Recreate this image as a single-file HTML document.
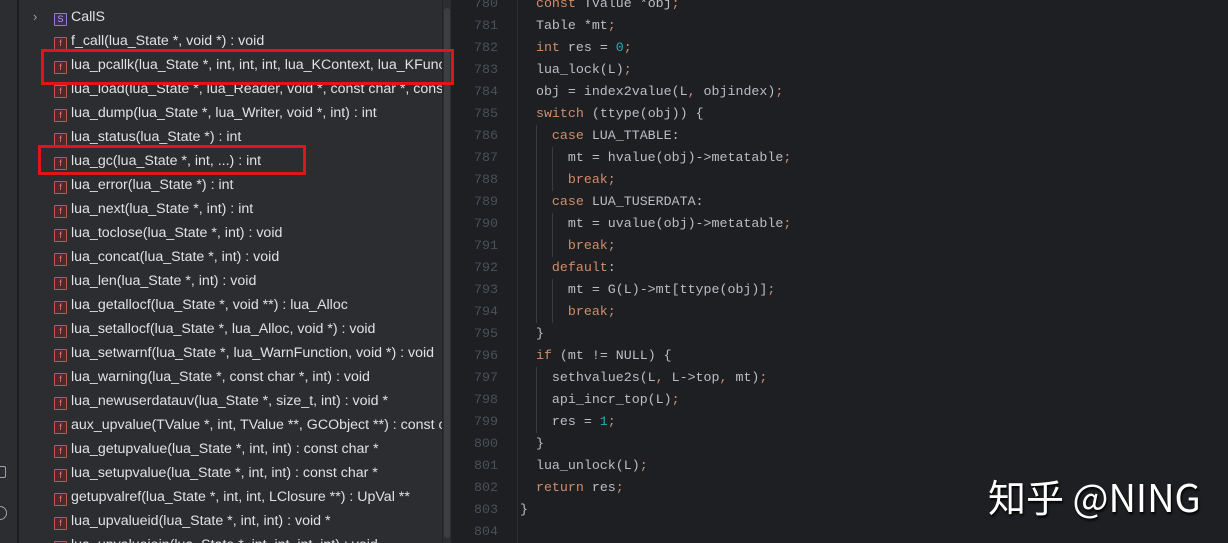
<!DOCTYPE html>
<html><head><meta charset="utf-8"><style>
*{margin:0;padding:0;box-sizing:border-box}
body{width:1228px;height:543px;overflow:hidden;background:#1e1f22;position:relative;font-family:"Liberation Sans",sans-serif}
#strip{position:absolute;left:0;top:0;width:18px;height:543px;background:#2b2d30;border-right:1px solid #1e1f22}
#tree{position:absolute;left:19px;top:0;width:423px;height:543px;background:#2b2d30;overflow:hidden}
#sb{position:absolute;left:442px;top:0;width:9px;height:543px;background:#2b2d30;border-left:1px solid #232428}
#sb div{position:absolute;left:1px;top:8px;width:6px;height:530px;background:#3c3e42;border-radius:3px}
.row{position:absolute;left:51px;height:24px;line-height:24px;color:#dfe1e5;font-size:14.2px;white-space:nowrap}
.ic{display:inline-block;width:13px;height:13px;border:1px solid #c75450;background:#4a2a2b;color:#e07a75;font-size:9px;line-height:11px;text-align:center;vertical-align:-1px;margin-right:4px;border-radius:1px}
.ic.s{border-color:#9876d6;background:#3a2f52;color:#b79df0}
.hl{position:absolute;border:3px solid #e0141a}
#ln{position:absolute;left:452px;top:0;width:46px;text-align:right;color:#4b5059;font-family:"Liberation Mono",monospace;font-size:13.3px}
#gut{position:absolute;left:517px;top:0;width:1px;height:543px;background:#2b2d30}
#code{position:absolute;left:520px;top:0;color:#bcbec4;font-family:"Liberation Mono",monospace;font-size:13.3px}
.l{height:22px;line-height:22px;white-space:pre}
.k{color:#cf8e6d}.n{color:#2aacb8}
.g{position:absolute;width:1px;background:#393b40}
#wm{position:absolute;left:988px;top:468px;color:#fff;font-size:38px;font-family:"Noto Sans CJK SC",sans-serif;text-shadow:1px 2px 2px #000}
</style></head><body>
<div id="strip">
<div style="position:absolute;left:-6px;top:466px;width:12px;height:12px;border:1.5px solid #9da0a8;border-radius:2px"></div>
<div style="position:absolute;left:-7px;top:506px;width:14px;height:14px;border:1.5px solid #9da0a8;border-radius:50%"></div>
</div>
<div id="tree">
<div style="position:absolute;left:14px;top:5px;color:#9da0a8;font-size:13px;line-height:24px">›</div>
<div class="row" style="top:5px;left:35px"><span class="ic s">S</span>CallS</div>
<div class="row" style="top:29px;left:35px"><span class="ic">f</span>f_call(lua_State *, void *) : void</div>
<div class="row" style="top:53px;left:35px"><span class="ic">f</span>lua_pcallk(lua_State *, int, int, int, lua_KContext, lua_KFunction) : int</div>
<div class="row" style="top:77px;left:35px"><span class="ic">f</span>lua_load(lua_State *, lua_Reader, void *, const char *, const char *) : int</div>
<div class="row" style="top:101px;left:35px"><span class="ic">f</span>lua_dump(lua_State *, lua_Writer, void *, int) : int</div>
<div class="row" style="top:125px;left:35px"><span class="ic">f</span>lua_status(lua_State *) : int</div>
<div class="row" style="top:149px;left:35px"><span class="ic">f</span>lua_gc(lua_State *, int, ...) : int</div>
<div class="row" style="top:173px;left:35px"><span class="ic">f</span>lua_error(lua_State *) : int</div>
<div class="row" style="top:197px;left:35px"><span class="ic">f</span>lua_next(lua_State *, int) : int</div>
<div class="row" style="top:221px;left:35px"><span class="ic">f</span>lua_toclose(lua_State *, int) : void</div>
<div class="row" style="top:245px;left:35px"><span class="ic">f</span>lua_concat(lua_State *, int) : void</div>
<div class="row" style="top:269px;left:35px"><span class="ic">f</span>lua_len(lua_State *, int) : void</div>
<div class="row" style="top:293px;left:35px"><span class="ic">f</span>lua_getallocf(lua_State *, void **) : lua_Alloc</div>
<div class="row" style="top:317px;left:35px"><span class="ic">f</span>lua_setallocf(lua_State *, lua_Alloc, void *) : void</div>
<div class="row" style="top:341px;left:35px"><span class="ic">f</span>lua_setwarnf(lua_State *, lua_WarnFunction, void *) : void</div>
<div class="row" style="top:365px;left:35px"><span class="ic">f</span>lua_warning(lua_State *, const char *, int) : void</div>
<div class="row" style="top:389px;left:35px"><span class="ic">f</span>lua_newuserdatauv(lua_State *, size_t, int) : void *</div>
<div class="row" style="top:413px;left:35px"><span class="ic">f</span>aux_upvalue(TValue *, int, TValue **, GCObject **) : const char *</div>
<div class="row" style="top:437px;left:35px"><span class="ic">f</span>lua_getupvalue(lua_State *, int, int) : const char *</div>
<div class="row" style="top:461px;left:35px"><span class="ic">f</span>lua_setupvalue(lua_State *, int, int) : const char *</div>
<div class="row" style="top:485px;left:35px"><span class="ic">f</span>getupvalref(lua_State *, int, int, LClosure **) : UpVal **</div>
<div class="row" style="top:509px;left:35px"><span class="ic">f</span>lua_upvalueid(lua_State *, int, int) : void *</div>
<div class="row" style="top:533px;left:35px"><span class="ic">f</span>lua_upvaluejoin(lua_State *, int, int, int, int) : void</div>
</div>
<div id="sb"><div></div></div>
<div class="hl" style="left:41px;top:49px;width:413px;height:36px"></div>
<div class="hl" style="left:38px;top:145px;width:268px;height:30px"></div>
<div id="ln" style="top:-7px">
<div class="l">780</div><div class="l">781</div><div class="l">782</div><div class="l">783</div><div class="l">784</div><div class="l">785</div><div class="l">786</div><div class="l">787</div><div class="l">788</div><div class="l">789</div><div class="l">790</div><div class="l">791</div><div class="l">792</div><div class="l">793</div><div class="l">794</div><div class="l">795</div><div class="l">796</div><div class="l">797</div><div class="l">798</div><div class="l">799</div><div class="l">800</div><div class="l">801</div><div class="l">802</div><div class="l">803</div><div class="l">804</div>
</div>
<div id="gut"></div>
<div class="g" style="left:536px;top:125px;height:198px"></div>
<div class="g" style="left:552px;top:147px;height:44px"></div>
<div class="g" style="left:552px;top:213px;height:44px"></div>
<div class="g" style="left:552px;top:279px;height:44px"></div>
<div class="g" style="left:536px;top:367px;height:66px"></div>
<div id="code" style="top:-7px"><div class="l">  <span class="k">const</span> TValue *obj<span class="k">;</span></div><div class="l">  Table *mt<span class="k">;</span></div><div class="l">  <span class="k">int</span> res = <span class="n">0</span><span class="k">;</span></div><div class="l">  lua_lock(L)<span class="k">;</span></div><div class="l">  obj = index2value(L<span class="k">,</span> objindex)<span class="k">;</span></div><div class="l">  <span class="k">switch</span> (ttype(obj)) {</div><div class="l">    <span class="k">case</span> LUA_TTABLE:</div><div class="l">      mt = hvalue(obj)->metatable<span class="k">;</span></div><div class="l">      <span class="k">break;</span></div><div class="l">    <span class="k">case</span> LUA_TUSERDATA:</div><div class="l">      mt = uvalue(obj)->metatable<span class="k">;</span></div><div class="l">      <span class="k">break;</span></div><div class="l">    <span class="k">default</span>:</div><div class="l">      mt = G(L)->mt[ttype(obj)]<span class="k">;</span></div><div class="l">      <span class="k">break;</span></div><div class="l">  }</div><div class="l">  <span class="k">if</span> (mt != NULL) {</div><div class="l">    sethvalue2s(L<span class="k">,</span> L->top<span class="k">,</span> mt)<span class="k">;</span></div><div class="l">    api_incr_top(L)<span class="k">;</span></div><div class="l">    res = <span class="n">1</span><span class="k">;</span></div><div class="l">  }</div><div class="l">  lua_unlock(L)<span class="k">;</span></div><div class="l">  <span class="k">return</span> res<span class="k">;</span></div><div class="l">}</div><div class="l"> </div></div>
<div id="wm">知乎 @NING</div>
</body></html>
